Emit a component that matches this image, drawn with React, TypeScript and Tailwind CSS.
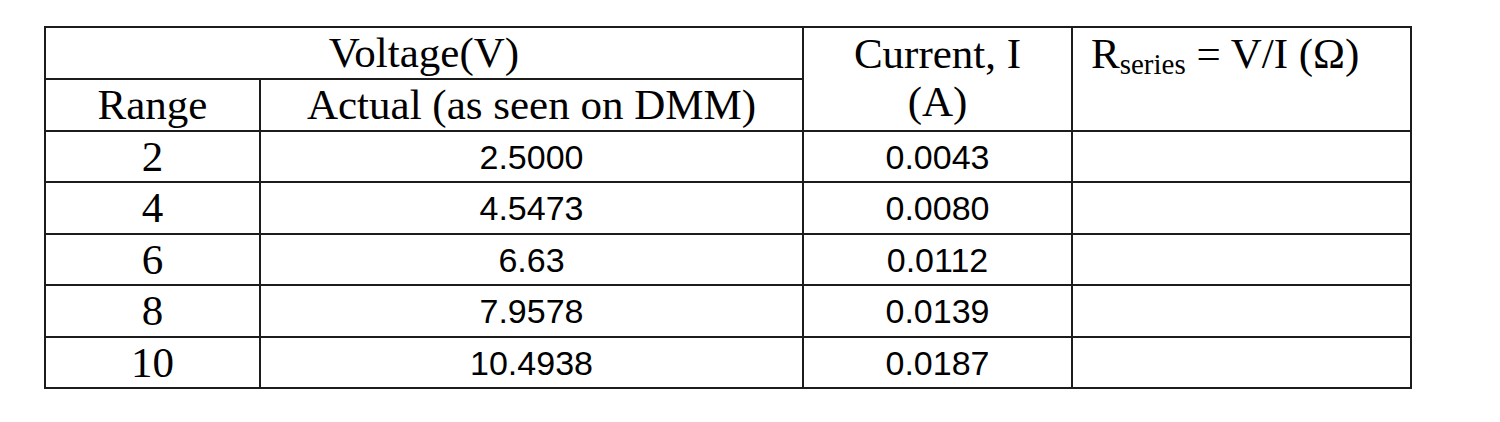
import React from "react";

const rows = [
  { r: "2", v: "2.5000", i: "0.0043", h: "h-[51px]" },
  { r: "4", v: "4.5473", i: "0.0080", h: "h-[52px]" },
  { r: "6", v: "6.63", i: "0.0112", h: "h-[51px]" },
  { r: "8", v: "7.9578", i: "0.0139", h: "h-[52px]" },
  { r: "10", v: "10.4938", i: "0.0187", h: "h-[51px]" },
];

const serif = "font-['Liberation_Serif','Times_New_Roman',serif]";
const sans = "font-['Liberation_Sans',Arial,sans-serif]";

export default function App() {
  return (
    <div className="w-[1500px] h-[422px] bg-white pl-[44px] pt-[26px]">
      <table className="border-collapse table-fixed text-black w-[1366px]">
        <colgroup>
          <col className="w-[215px]" />
          <col className="w-[543px]" />
          <col className="w-[269px]" />
          <col className="w-[339px]" />
        </colgroup>
        <tbody>
          <tr className="h-[52px]">
            <td
              colSpan={2}
              className={`border-2 border-[#1c1c1c] p-0 text-center text-[43px] leading-[48px] ${serif}`}
            >
              Voltage(V)
            </td>
            <td
              rowSpan={2}
              className={`border-2 border-[#1c1c1c] p-0 text-center align-top pt-[2px] text-[43px] leading-[48px] ${serif}`}
            >
              Current, I
              <br />
              (A)
            </td>
            <td
              rowSpan={2}
              className={`border-2 border-[#1c1c1c] p-0 pl-[18px] pt-[2px] text-left align-top text-[43px] leading-[48px] ${serif}`}
            >
              R<span className="text-[29px] leading-none align-[-6px]">series</span> = V/I (Ω)
            </td>
          </tr>
          <tr className="h-[52px]">
            <td className={`border-2 border-[#1c1c1c] p-0 text-center text-[43px] leading-[48px] ${serif}`}>
              Range
            </td>
            <td className={`border-2 border-[#1c1c1c] p-0 text-center text-[43px] leading-[48px] ${serif}`}>
              Actual (as seen on DMM)
            </td>
          </tr>
          {rows.map((row) => (
            <tr key={row.r} className={row.h}>
              <td className={`border-2 border-[#1c1c1c] p-0 text-center text-[43px] leading-[48px] ${serif}`}>
                {row.r}
              </td>
              <td className={`border-2 border-[#1c1c1c] p-0 text-center text-[34px] leading-[40px] ${sans}`}>
                {row.v}
              </td>
              <td className={`border-2 border-[#1c1c1c] p-0 text-center text-[34px] leading-[40px] ${sans}`}>
                {row.i}
              </td>
              <td className="border-2 border-[#1c1c1c] p-0"></td>
            </tr>
          ))}
        </tbody>
      </table>
    </div>
  );
}
